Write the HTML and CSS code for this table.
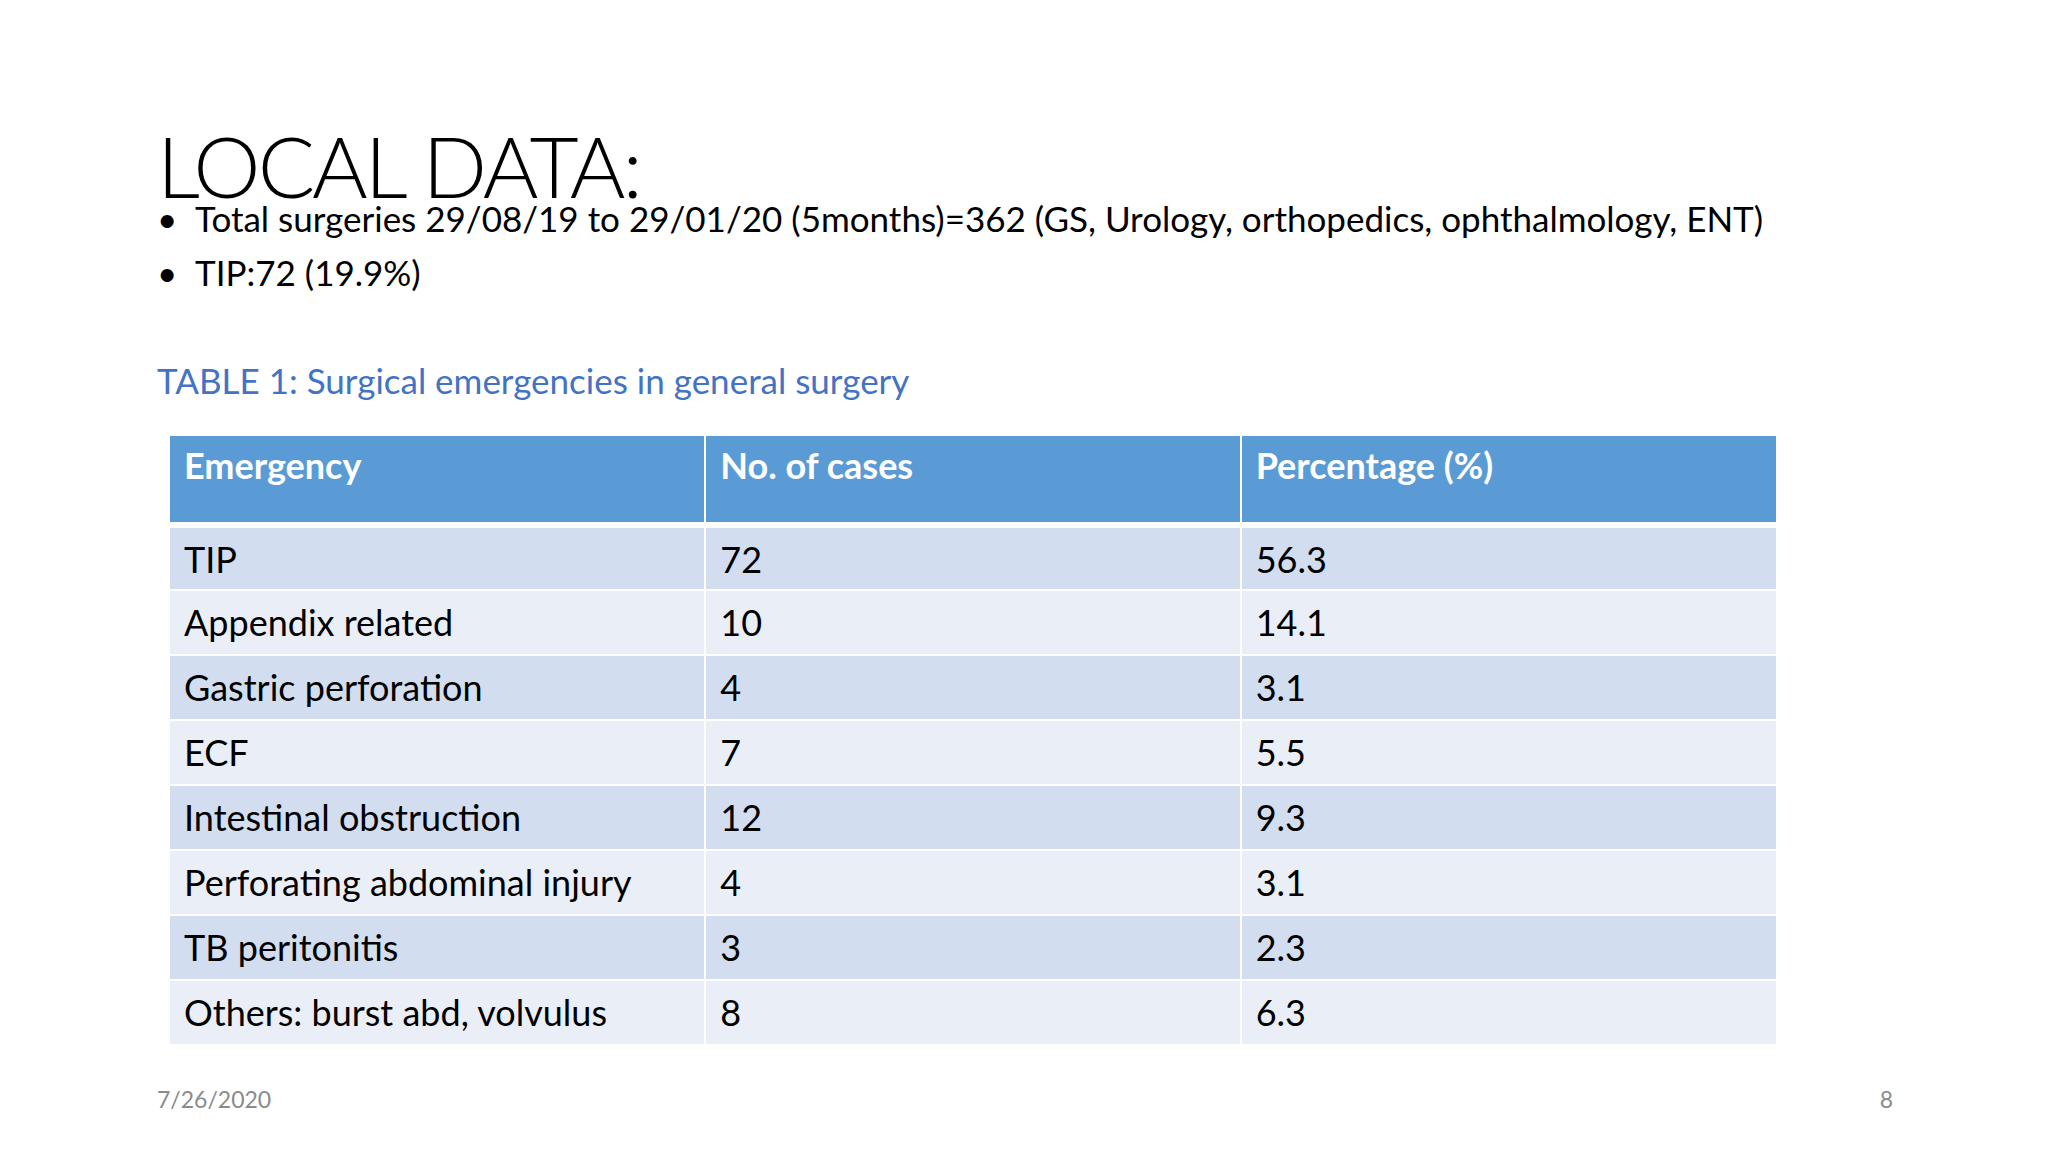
FILE: index.html
```html
<!DOCTYPE html>
<html>
<head>
<meta charset="utf-8">
<link rel="stylesheet" href="styles.css">
</head>
<body>
<div class="slide">
  <h1 class="title">LOCAL DATA:</h1>
  <ul class="bullets">
    <li>Total surgeries 29/08/19 to 29/01/20 (5months)=362 (GS, Urology, orthopedics, ophthalmology, ENT)</li>
    <li>TIP:72 (19.9%)</li>
  </ul>
  <p class="caption">TABLE 1: Surgical emergencies in general surgery</p>
  <table class="data">
    <thead>
      <tr><th>Emergency</th><th>No. of cases</th><th>Percentage (%)</th></tr>
    </thead>
    <tbody>
      <tr><td>TIP</td><td>72</td><td>56.3</td></tr>
      <tr><td>Appendix related</td><td>10</td><td>14.1</td></tr>
      <tr><td>Gastric perforation</td><td>4</td><td>3.1</td></tr>
      <tr><td>ECF</td><td>7</td><td>5.5</td></tr>
      <tr><td>Intestinal obstruction</td><td>12</td><td>9.3</td></tr>
      <tr><td>Perforating abdominal injury</td><td>4</td><td>3.1</td></tr>
      <tr><td>TB peritonitis</td><td>3</td><td>2.3</td></tr>
      <tr><td>Others: burst abd, volvulus</td><td>8</td><td>6.3</td></tr>
    </tbody>
  </table>
  <div class="footer">
    <span class="date">7/26/2020</span>
    <span class="page">8</span>
  </div>
</div>
</body>
</html>
```

FILE: styles.css
```css
html, body {
  margin: 0;
  padding: 0;
  background: #ffffff;
}
.slide {
  width: 2048px;
  height: 1152px;
  box-sizing: border-box;
  padding: 135px 0 0 157px;
  font-family: Lato, "Open Sans", sans-serif;
  color: #000;
  position: relative;
}
.title {
  margin: 0;
  font-weight: 300;
  font-size: 85px;
  line-height: 60px;
  letter-spacing: -3px;
}
.bullets {
  margin: -4px 0 0 0;
  padding: 0 0 0 38px;
  list-style: none;
  font-size: 35px;
  line-height: 54px;
}
.bullets li {
  position: relative;
}
.bullets li::before {
  content: "\2022";
  position: absolute;
  left: -38px;
}
.caption {
  margin: 54px 0 0 0;
  font-size: 35px;
  line-height: 54px;
  color: #4472C4;
}
.data {
  margin: 29px 0 0 13px;
  width: 1606px;
  border-collapse: collapse;
  table-layout: fixed;
  font-size: 36px;
}
.data th, .data td {
  text-align: left;
  vertical-align: top;
  padding: 8px 14px 0 14px;
  border: 2px solid #ffffff;
  line-height: 46px;
}
.data th {
  background: #5B9BD5;
  color: #ffffff;
  font-weight: 700;
  height: 89px;
  box-sizing: border-box;
  border-bottom: 6px solid #ffffff;
  border-top: none;
  padding-top: 6px;
}
.data td {
  height: 65px;
  box-sizing: border-box;
}
.data tbody tr:nth-child(odd) td {
  background: #D2DEEF;
}
.data tbody tr:nth-child(even) td {
  background: #EAEFF7;
}
.data tr > :first-child { border-left: none; }
.data tr > :last-child { border-right: none; }
.footer {
  position: absolute;
  left: 157px;
  right: 155px;
  top: 1085px;
  display: flex;
  justify-content: space-between;
  font-size: 23px;
  color: #8B8B8B;
}
```
